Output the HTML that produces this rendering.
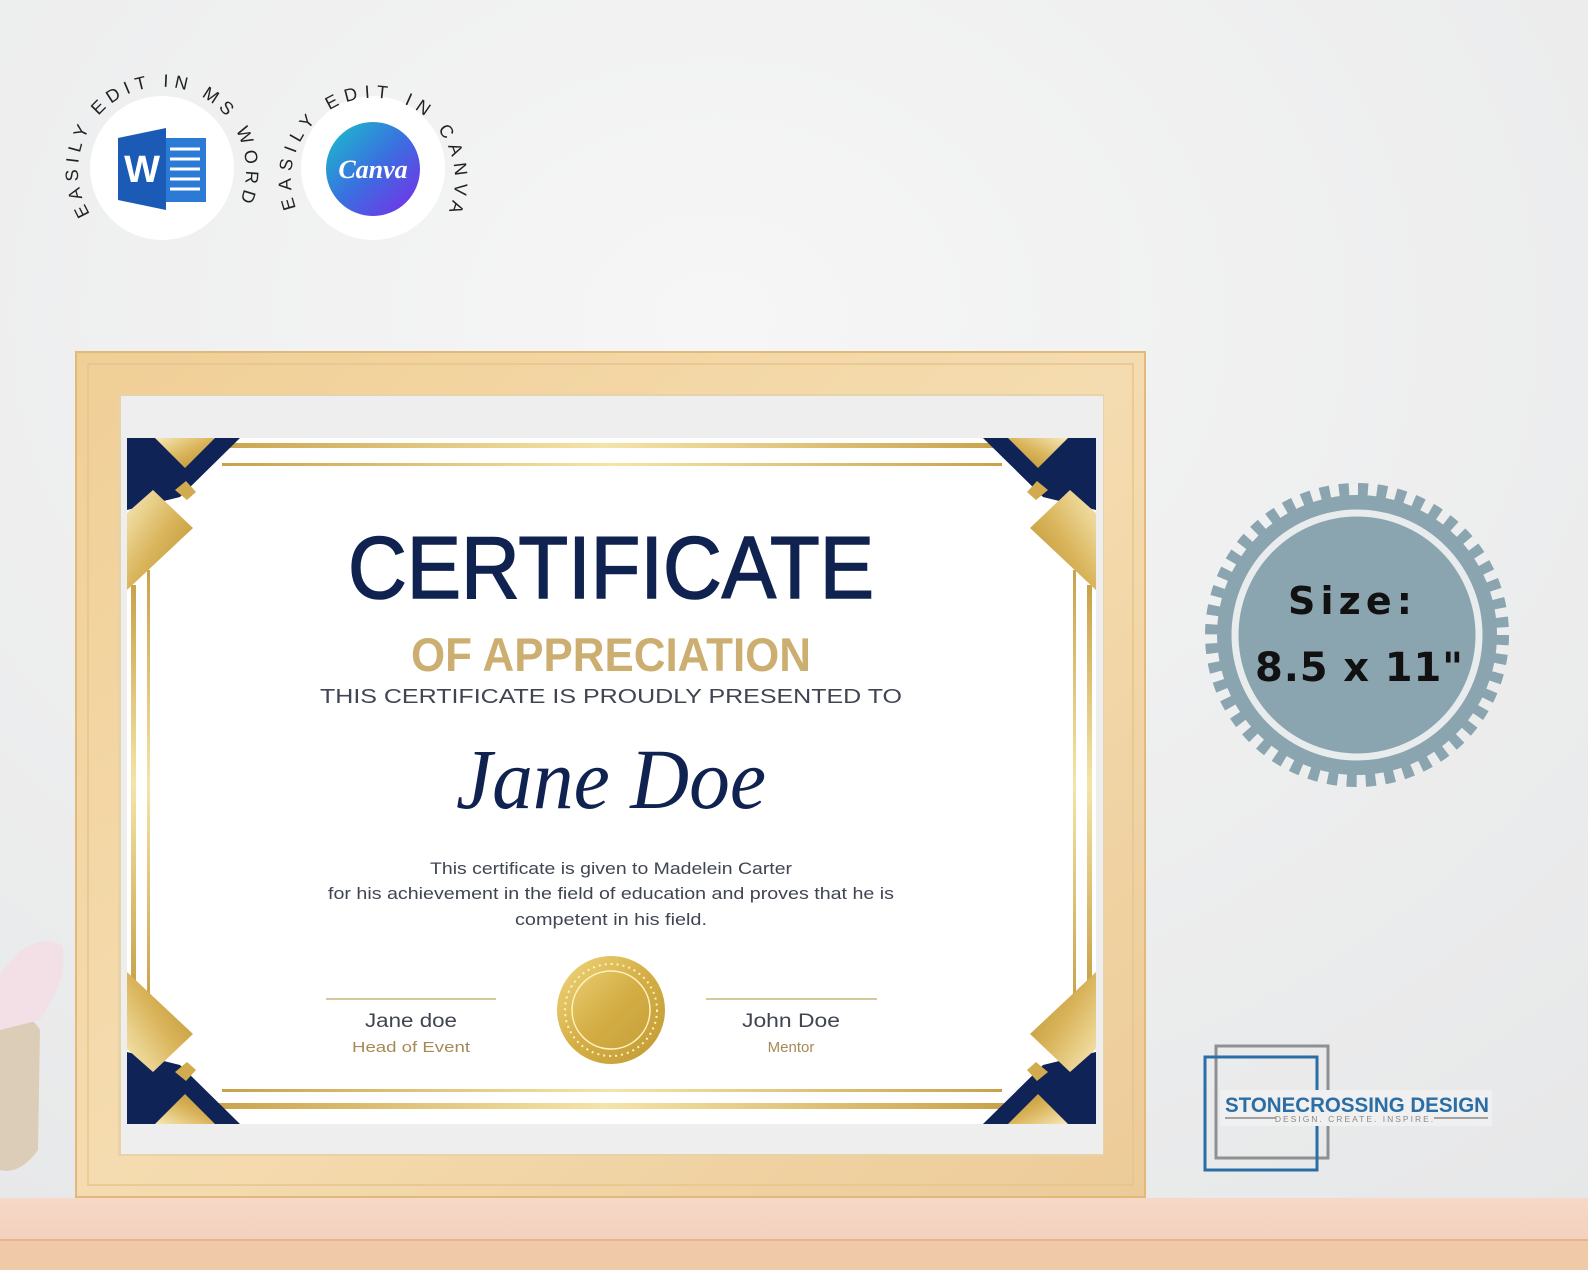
<!DOCTYPE html>
<html><head><meta charset="utf-8"><style>
html,body{margin:0;padding:0;width:1588px;height:1270px;overflow:hidden;background:#eeeeee}
svg{display:block}
</style></head><body>
<svg width="1588" height="1270" viewBox="0 0 1588 1270" xmlns="http://www.w3.org/2000/svg">
<defs>
<radialGradient id="bg" cx="0.45" cy="0.25" r="0.9"><stop offset="0" stop-color="#f6f6f6"/><stop offset="1" stop-color="#e6e7e8"/></radialGradient>
<linearGradient id="wood" x1="0" y1="0" x2="1" y2="1"><stop offset="0" stop-color="#f0cf95"/><stop offset="0.5" stop-color="#f5dcb0"/><stop offset="1" stop-color="#eccb98"/></linearGradient>
<linearGradient id="table" x1="0" y1="0" x2="0" y2="1"><stop offset="0" stop-color="#f6d8c8"/><stop offset="1" stop-color="#f0cdb4"/></linearGradient>
<linearGradient id="gold" x1="0" y1="0" x2="1" y2="1"><stop offset="0" stop-color="#f7e9b8"/><stop offset="0.5" stop-color="#d9b45a"/><stop offset="1" stop-color="#b98d2e"/></linearGradient>
<linearGradient id="goldh" x1="0" y1="0" x2="1" y2="0"><stop offset="0" stop-color="#c9a24a"/><stop offset="0.5" stop-color="#f5e4a8"/><stop offset="1" stop-color="#c9a24a"/></linearGradient>
<linearGradient id="goldv" x1="0" y1="0" x2="0" y2="1"><stop offset="0" stop-color="#c9a24a"/><stop offset="0.5" stop-color="#f5e4a8"/><stop offset="1" stop-color="#c9a24a"/></linearGradient>
<linearGradient id="seal" x1="0" y1="0" x2="1" y2="1"><stop offset="0" stop-color="#f0d77e"/><stop offset="0.5" stop-color="#d4ae45"/><stop offset="1" stop-color="#c19a35"/></linearGradient>
<linearGradient id="canva" x1="0" y1="0" x2="1" y2="1"><stop offset="0" stop-color="#19c3c9"/><stop offset="0.5" stop-color="#3a6fe0"/><stop offset="1" stop-color="#7c2ae8"/></linearGradient>
<path id="arcW" d="M 90 214 A 84 84 0 1 1 234 214"/>
<path id="arcC" d="M 296 208 A 82 82 0 1 1 450 208"/>
</defs>
<rect width="1588" height="1270" fill="url(#bg)"/>
<rect x="0" y="1198" width="1588" height="72" fill="url(#table)"/>
<rect x="0" y="1240" width="1588" height="30" fill="#efc9a8"/>
<line x1="0" y1="1240" x2="1588" y2="1240" stroke="#e3b690" stroke-width="2"/>
<path d="M0 1025 Q30 1010 40 1030 L38 1150 Q20 1175 0 1170 Z" fill="#dccdb9"/>
<path d="M0 975 Q30 930 62 945 Q70 975 40 1020 L0 1030 Z" fill="#f3e0e6"/>
<rect x="76" y="352" width="1069" height="845" fill="url(#wood)"/>
<rect x="76" y="352" width="1069" height="845" fill="none" stroke="#e2b979" stroke-width="2"/>
<rect x="88" y="364" width="1045" height="821" fill="none" stroke="#e6c48e" stroke-width="1.5"/>
<rect x="118" y="394" width="986" height="762" fill="#e8d2a8"/>
<rect x="121" y="396" width="982" height="758" fill="#eeeeee"/>
<rect x="127" y="438" width="969" height="686" fill="#ffffff"/>
<rect x="205" y="443" width="800" height="5" fill="url(#goldh)"/>
<rect x="222" y="463" width="780" height="3" fill="url(#goldh)"/>
<rect x="205" y="1103" width="800" height="6" fill="url(#goldh)"/>
<rect x="222" y="1089" width="780" height="3" fill="url(#goldh)"/>
<rect x="131" y="585" width="5" height="400" fill="url(#goldv)"/>
<rect x="147" y="570" width="3" height="430" fill="url(#goldv)"/>
<rect x="1087" y="585" width="5" height="400" fill="url(#goldv)"/>
<rect x="1073" y="570" width="3" height="430" fill="url(#goldv)"/>
<g id="corner">
<polygon points="127,438 240,438 180,497 127,510" fill="#0f2357"/>
<polygon points="155,438 215,438 185,468" fill="url(#gold)"/>
<polygon points="127,513 153,490 193,528 127,590" fill="url(#gold)"/>
<polygon points="175,490 186,481 196,492 187,500" fill="#d2ab4e"/>
</g>
<use href="#corner" transform="translate(1223,0) scale(-1,1)"/>
<use href="#corner" transform="translate(0,1562) scale(1,-1)"/>
<use href="#corner" transform="translate(1223,1562) scale(-1,-1)"/>
<text x="611" y="598" text-anchor="middle" font-family="Liberation Sans,sans-serif" font-size="88" fill="#0f2250" stroke="#0f2250" stroke-width="1.6" textLength="526" lengthAdjust="spacingAndGlyphs">CERTIFICATE</text>
<text x="611" y="671" text-anchor="middle" font-family="Liberation Sans,sans-serif" font-weight="bold" font-size="47" fill="#cdae71" textLength="400" lengthAdjust="spacingAndGlyphs">OF APPRECIATION</text>
<text x="611" y="703" text-anchor="middle" font-family="Liberation Sans,sans-serif" font-size="20" fill="#404552" textLength="582" lengthAdjust="spacingAndGlyphs">THIS CERTIFICATE IS PROUDLY PRESENTED TO</text>
<text x="611" y="808" text-anchor="middle" font-family="Liberation Serif,serif" font-style="italic" font-size="86" fill="#0f2250" textLength="310" lengthAdjust="spacingAndGlyphs">Jane Doe</text>
<g font-family="Liberation Sans,sans-serif" font-size="16.5" fill="#404552" text-anchor="middle">
<text x="611" y="874" textLength="362" lengthAdjust="spacingAndGlyphs">This certificate is given to Madelein Carter</text>
<text x="611" y="899" textLength="566" lengthAdjust="spacingAndGlyphs">for his achievement in the field of education and proves that he is</text>
<text x="611" y="925" textLength="192" lengthAdjust="spacingAndGlyphs">competent in his field.</text>
</g>
<line x1="326" y1="999" x2="496" y2="999" stroke="#d8c8a0" stroke-width="2"/>
<line x1="706" y1="999" x2="877" y2="999" stroke="#d8c8a0" stroke-width="2"/>
<g font-family="Liberation Sans,sans-serif" text-anchor="middle">
<text x="411" y="1027" font-size="19" fill="#404552" textLength="92" lengthAdjust="spacingAndGlyphs">Jane doe</text>
<text x="411" y="1052" font-size="15" fill="#a58a55" textLength="118" lengthAdjust="spacingAndGlyphs">Head of Event</text>
<text x="791" y="1027" font-size="19" fill="#404552" textLength="98" lengthAdjust="spacingAndGlyphs">John Doe</text>
<text x="791" y="1052" font-size="15" fill="#a58a55">Mentor</text>
</g>
<circle cx="611" cy="1010" r="54" fill="url(#seal)"/>
<circle cx="611" cy="1010" r="46" fill="none" stroke="#fff2c0" stroke-width="2" stroke-dasharray="2 4"/>
<circle cx="611" cy="1010" r="39" fill="none" stroke="#fff2c0" stroke-width="1.5"/>
<circle cx="162" cy="168" r="72" fill="#ffffff"/>
<text font-family="Liberation Sans,sans-serif" font-size="18" fill="#222"><textPath href="#arcW" textLength="340" lengthAdjust="spacing">EASILY EDIT IN MS WORD</textPath></text>
<polygon points="118,138 166,128 166,210 118,200" fill="#1b5bb5"/>
<rect x="166" y="138" width="40" height="64" fill="#2b7ad6"/>
<g stroke="#ffffff" stroke-width="3"><line x1="170" y1="149" x2="200" y2="149"/><line x1="170" y1="159" x2="200" y2="159"/><line x1="170" y1="169" x2="200" y2="169"/><line x1="170" y1="179" x2="200" y2="179"/><line x1="170" y1="189" x2="200" y2="189"/></g>
<text x="142" y="182" text-anchor="middle" font-family="Liberation Sans,sans-serif" font-weight="bold" font-size="38" fill="#fff">W</text>
<circle cx="373" cy="168" r="72" fill="#ffffff"/>
<text font-family="Liberation Sans,sans-serif" font-size="18" fill="#222"><textPath href="#arcC" textLength="318" lengthAdjust="spacing">EASILY EDIT IN CANVA</textPath></text>
<circle cx="373" cy="169" r="47" fill="url(#canva)"/>
<text x="373" y="178" text-anchor="middle" font-family="Liberation Serif,serif" font-style="italic" font-weight="bold" font-size="26" fill="#fff">Canva</text>
<circle cx="1357" cy="635" r="140" fill="#8ba5b0"/>
<circle cx="1357" cy="635" r="145" fill="none" stroke="#8ba5b0" stroke-width="14" stroke-dasharray="10 9"/>
<circle cx="1357" cy="635" r="122" fill="none" stroke="#e9eced" stroke-width="7"/>
<g font-family="DejaVu Sans,sans-serif" font-weight="bold" fill="#111" text-anchor="middle">
<text x="1350" y="614" font-size="38" textLength="124" lengthAdjust="spacing">Size:</text>
<text x="1359" y="681" font-size="40" textLength="208" lengthAdjust="spacing">8.5 x 11"</text>
</g>
<rect x="1216" y="1046" width="112" height="112" fill="none" stroke="#8e9094" stroke-width="3"/>
<rect x="1205" y="1057" width="112" height="113" fill="none" stroke="#2a6ea5" stroke-width="3"/>
<rect x="1220" y="1090" width="272" height="36" fill="#f0f0f0"/>
<text x="1225" y="1112" font-family="Liberation Sans,sans-serif" font-weight="bold" font-size="21" fill="#2b6ea6" textLength="264" lengthAdjust="spacingAndGlyphs">STONECROSSING DESIGN</text>
<line x1="1225" y1="1118" x2="1276" y2="1118" stroke="#888" stroke-width="1.5"/>
<line x1="1434" y1="1118" x2="1488" y2="1118" stroke="#888" stroke-width="1.5"/>
<text x="1355" y="1122" text-anchor="middle" font-family="Liberation Sans,sans-serif" font-size="8.5" fill="#888" letter-spacing="2">DESIGN. CREATE. INSPIRE.</text>
</svg>
</body></html>
